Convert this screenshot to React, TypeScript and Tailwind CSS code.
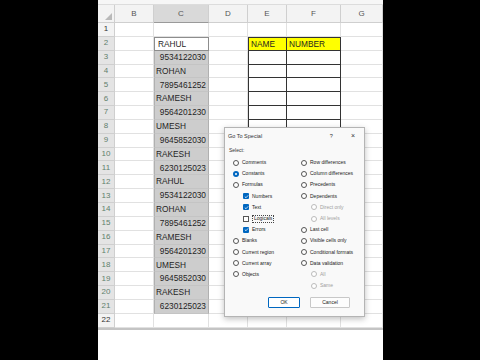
import React from 'react'

const cols = [17, 39, 55, 39, 39, 54, 42]
const letters = ['', 'B', 'C', 'D', 'E', 'F', 'G']

const colC: Record<number, string> = {
  2: 'RAHUL',
  3: '9534122030',
  4: 'ROHAN',
  5: '7895461252',
  6: 'RAMESH',
  7: '9564201230',
  8: 'UMESH',
  9: '9645852030',
  10: 'RAKESH',
  11: '6230125023',
  12: 'RAHUL',
  13: '9534122030',
  14: 'ROHAN',
  15: '7895461252',
  16: 'RAMESH',
  17: '9564201230',
  18: 'UMESH',
  19: '9645852030',
  20: 'RAKESH',
  21: '6230125023',
}

function Radio({ on, off }: { on?: boolean; off?: boolean }) {
  if (on) {
    return (
      <span className="w-[6px] h-[6px] rounded-full bg-[#0067c0] flex items-center justify-center shrink-0">
        <span className="w-[2px] h-[2px] rounded-full bg-white" />
      </span>
    )
  }
  return (
    <span
      className={`w-[6px] h-[6px] rounded-full border-[0.6px] bg-white shrink-0 ${
        off ? 'border-[#bbb]' : 'border-[#555]'
      }`}
    />
  )
}

function Check({ on }: { on?: boolean }) {
  if (!on) return <span className="w-[6px] h-[6px] border-[0.6px] border-[#555] bg-white shrink-0" />
  return (
    <span className="w-[6px] h-[6px] rounded-[1px] bg-[#0067c0] shrink-0 flex items-center justify-center">
      <svg viewBox="0 0 6 6" className="w-[5px] h-[5px]">
        <path d="M1 3.2 L2.4 4.5 L5 1.6" stroke="white" strokeWidth="0.9" fill="none" />
      </svg>
    </span>
  )
}

type Item = { label: string; kind: 'r' | 'c'; on?: boolean; off?: boolean; indent?: boolean; focus?: boolean }

const leftItems: Item[] = [
  { label: 'Comments', kind: 'r' },
  { label: 'Constants', kind: 'r', on: true },
  { label: 'Formulas', kind: 'r' },
  { label: 'Numbers', kind: 'c', on: true, indent: true },
  { label: 'Text', kind: 'c', on: true, indent: true },
  { label: 'Logicals', kind: 'c', indent: true, focus: true },
  { label: 'Errors', kind: 'c', on: true, indent: true },
  { label: 'Blanks', kind: 'r' },
  { label: 'Current region', kind: 'r' },
  { label: 'Current array', kind: 'r' },
  { label: 'Objects', kind: 'r' },
]

const rightItems: Item[] = [
  { label: 'Row differences', kind: 'r' },
  { label: 'Column differences', kind: 'r' },
  { label: 'Precedents', kind: 'r' },
  { label: 'Dependents', kind: 'r' },
  { label: 'Direct only', kind: 'r', off: true, indent: true },
  { label: 'All levels', kind: 'r', off: true, indent: true },
  { label: 'Last cell', kind: 'r' },
  { label: 'Visible cells only', kind: 'r' },
  { label: 'Conditional formats', kind: 'r' },
  { label: 'Data validation', kind: 'r' },
  { label: 'All', kind: 'r', off: true, indent: true },
  { label: 'Same', kind: 'r', off: true, indent: true },
]

function DialogRow({ it }: { it: Item }) {
  return (
    <div className={`h-[11.2px] flex items-center gap-[3px] ${it.indent ? 'pl-[10px]' : ''}`}>
      {it.kind === 'r' ? <Radio on={it.on} off={it.off} /> : <Check on={it.on} />}
      {it.focus ? (
        <span className="leading-none text-[#222] border border-dotted border-[#444] px-[1px] py-[0.5px]">
          {it.label}
        </span>
      ) : (
        <span className={`leading-none ${it.off ? 'text-[#a0a0a0]' : 'text-[#222]'}`}>{it.label}</span>
      )}
    </div>
  )
}

function GoToSpecial() {
  return (
    <div className="absolute left-[126px] top-[127px] w-[141px] h-[190px] bg-[#f9f9f9] border border-[#b4b4b4] shadow-[0_2px_6px_rgba(0,0,0,0.25)] text-[5px] flex flex-col">
      <div className="h-[17px] flex items-center pl-[3px] pr-[9px] text-[#333] text-[5.5px]">
        <span>Go To Special</span>
        <span className="ml-auto">?</span>
        <span className="ml-[18px] text-[7px]">×</span>
      </div>
      <div className="h-[12px] flex items-center pl-[4px] text-[#333]">Select:</div>
      <div className="flex pl-[8px]">
        <div className="w-[68px] flex flex-col">
          {leftItems.map((it) => (
            <DialogRow key={it.label} it={it} />
          ))}
        </div>
        <div className="flex flex-col">
          {rightItems.map((it) => (
            <DialogRow key={it.label} it={it} />
          ))}
        </div>
      </div>
      <div className="flex justify-end gap-[10px] pr-[14px] mt-[6px]">
        <div className="w-[32px] h-[11px] border border-[#0067c0] bg-white rounded-[1px] flex items-center justify-center text-[#222]">
          OK
        </div>
        <div className="w-[40px] h-[11px] border border-[#c8c8c8] bg-[#fdfdfd] rounded-[1px] flex items-center justify-center text-[#222]">
          Cancel
        </div>
      </div>
    </div>
  )
}

function cellClass(r: number, c: number) {
  const base = 'h-full shrink-0 flex items-center overflow-hidden whitespace-nowrap'
  if (c === 0) {
    const sel = r >= 2 && r <= 21
    return `${base} justify-center border-r border-b border-[#cfcfcf] ${
      sel ? 'bg-[#e4e4e4] text-[#5f7f6c]' : 'bg-[#f3f3f3] text-[#333]'
    }`
  }
  if (c === 2) {
    if (r === 2) return `${base} bg-white border border-[#8d8d8d] pl-[2px]`
    if (r >= 3 && r <= 21) return `${base} bg-[#cdcdcd] border-b border-[#c4c4c4] border-l border-l-[#b0b0b0] border-r border-r-[#b0b0b0]`
  }
  if ((c === 4 || c === 5) && r >= 2 && r <= 10) {
    const yellow = r === 2 ? 'bg-[#ffff00]' : 'bg-white'
    const left = c === 4 ? 'border-l border-l-[#333]' : ''
    const top = r === 2 ? 'border-t border-t-[#333]' : ''
    return `${base} ${yellow} ${left} ${top} border-r border-r-[#333] border-b border-b-[#333] pl-[2px]`
  }
  return `${base} bg-white border-r border-b border-[#e1e1e1]`
}

export default function App() {
  const rows = Array.from({ length: 22 }, (_, i) => i + 1)
  return (
    <div className="w-[480px] h-[360px] bg-black flex overflow-hidden font-['Liberation_Sans',Arial,sans-serif]">
      <div className="w-[98px] shrink-0" />
      <div className="w-[285px] shrink-0 bg-white relative flex flex-col">
        <div className="h-[5px] bg-[#f6f6f6] border-b border-[#dcdcdc]" />
        <div className="h-[18px] flex">
          {cols.map((w, c) => (
            <div
              key={c}
              style={{ width: w }}
              className={`h-full shrink-0 flex items-center justify-center text-[8px] border-r border-b border-[#cfcfcf] ${
                c === 2 ? 'bg-[#d9d9d9] text-[#555] border-b-[#9a9a9a]' : 'bg-[#f3f3f3] text-[#555]'
              }`}
            >
              {c === 0 ? (
                <span className="self-end ml-auto mr-[2px] mb-[2px] w-0 h-0 border-l-[7px] border-l-transparent border-b-[7px] border-b-[#b9b9b9]" />
              ) : (
                letters[c]
              )}
            </div>
          ))}
        </div>
        {rows.map((r) => (
          <div key={r} className="h-[13.85px] flex text-[8.3px] text-[#1f1f1f]">
            {cols.map((w, c) => {
              let content: React.ReactNode = null
              if (c === 0) content = <span className="text-[8px]">{r}</span>
              if (c === 2 && colC[r]) {
                const isNum = /\d/.test(colC[r])
                content = isNum ? (
                  <span className="ml-auto pr-[2px]">{colC[r]}</span>
                ) : (
                  <span className="pl-[1px]">{colC[r]}</span>
                )
              }
              if (r === 2 && c === 4) content = 'NAME'
              if (r === 2 && c === 5) content = 'NUMBER'
              return (
                <div key={c} style={{ width: w }} className={cellClass(r, c)}>
                  {content}
                </div>
              )
            })}
          </div>
        ))}
        <div className="h-[2px] bg-[#c4c4c4]" />
        <div className="flex-1 bg-white" />
        <GoToSpecial />
      </div>
      <div className="flex-1" />
    </div>
  )
}
